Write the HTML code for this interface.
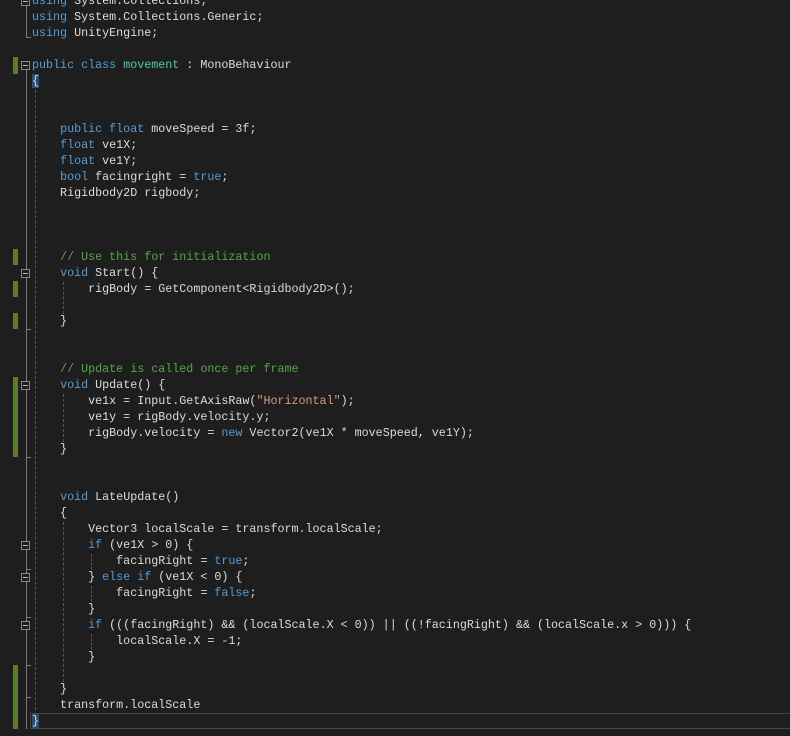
<!DOCTYPE html>
<html><head><style>
html,body{margin:0;padding:0;background:#1e1e1e;width:790px;height:736px;overflow:hidden;position:relative}
.l{position:absolute;left:32px;height:16px;line-height:16px;white-space:pre;font-family:"Liberation Mono",monospace;font-size:11.7px;color:#dcdcdc}
.k{color:#569cd6}.t{color:#4ec9b0}.c{color:#57a64a}.s{color:#d69d85}
.g{position:absolute;left:13px;width:5px;background:#5a7a34}
.v{position:absolute;left:26px;width:1px;background:#7a7a7a}
.h{position:absolute;left:26px;width:5px;height:1px;background:#7a7a7a}
.bx{position:absolute;left:21px;width:9px;height:9px;border:1px solid #8a8a8a;box-sizing:border-box;background:#1e1e1e}
.bx:after{content:"";position:absolute;left:1px;top:3px;width:5px;height:1px;background:#c0c0c0}
.d{position:absolute;width:0;border-left:1px dashed #555}
.hl{background:#264f78}
</style></head><body>
<div class="g" style="top:57px;height:17px"></div>
<div class="g" style="top:249px;height:16px"></div>
<div class="g" style="top:281px;height:16px"></div>
<div class="g" style="top:313px;height:16px"></div>
<div class="g" style="top:377px;height:80px"></div>
<div class="g" style="top:665px;height:64px"></div>

<div class="v" style="top:4px;height:33px"></div><div class="h" style="top:37px"></div>
<div class="v" style="top:70px;height:659px"></div>
<div class="h" style="top:329px"></div><div class="h" style="top:457px"></div>
<div class="h" style="top:569px"></div><div class="h" style="top:617px"></div>
<div class="h" style="top:665px"></div><div class="h" style="top:697px"></div>
<div class="bx" style="top:-3px"></div>
<div class="bx" style="top:61px"></div>
<div class="bx" style="top:269px"></div>
<div class="bx" style="top:381px"></div>
<div class="bx" style="top:541px"></div>
<div class="bx" style="top:573px"></div>
<div class="bx" style="top:621px"></div>

<div class="d" style="left:35px;top:90px;height:620px"></div>
<div class="d" style="left:63px;top:282px;height:32px"></div>
<div class="d" style="left:63px;top:394px;height:48px"></div>
<div class="d" style="left:63px;top:522px;height:160px"></div>
<div class="d" style="left:91px;top:554px;height:16px"></div>
<div class="d" style="left:91px;top:586px;height:16px"></div>
<div class="d" style="left:91px;top:634px;height:16px"></div>

<div style="position:absolute;left:30px;top:713px;width:770px;height:16px;border:1px solid #464646;box-sizing:border-box"></div>

<div class="l" style="top:-7px"><span class="k">using</span> System.Collections;</div>
<div class="l" style="top:9px"><span class="k">using</span> System.Collections.Generic;</div>
<div class="l" style="top:25px"><span class="k">using</span> UnityEngine;</div>
<div class="l" style="top:57px"><span class="k">public class</span> <span class="t">movement</span> : MonoBehaviour</div>
<div class="l" style="top:73px"><span class="hl">{</span></div>
<div class="l" style="top:121px">    <span class="k">public float</span> moveSpeed = 3f;</div>
<div class="l" style="top:137px">    <span class="k">float</span> ve1X;</div>
<div class="l" style="top:153px">    <span class="k">float</span> ve1Y;</div>
<div class="l" style="top:169px">    <span class="k">bool</span> facingright = <span class="k">true</span>;</div>
<div class="l" style="top:185px">    Rigidbody2D rigbody;</div>
<div class="l" style="top:249px">    <span class="c">// Use this for initialization</span></div>
<div class="l" style="top:265px">    <span class="k">void</span> Start() {</div>
<div class="l" style="top:281px">        rigBody = GetComponent&lt;Rigidbody2D&gt;();</div>
<div class="l" style="top:313px">    }</div>
<div class="l" style="top:361px">    <span class="c">// Update is called once per frame</span></div>
<div class="l" style="top:377px">    <span class="k">void</span> Update() {</div>
<div class="l" style="top:393px">        ve1x = Input.GetAxisRaw(<span class="s">"Horizontal"</span>);</div>
<div class="l" style="top:409px">        ve1y = rigBody.velocity.y;</div>
<div class="l" style="top:425px">        rigBody.velocity = <span class="k">new</span> Vector2(ve1X * moveSpeed, ve1Y);</div>
<div class="l" style="top:441px">    }</div>
<div class="l" style="top:489px">    <span class="k">void</span> LateUpdate()</div>
<div class="l" style="top:505px">    {</div>
<div class="l" style="top:521px">        Vector3 localScale = transform.localScale;</div>
<div class="l" style="top:537px">        <span class="k">if</span> (ve1X &gt; 0) {</div>
<div class="l" style="top:553px">            facingRight = <span class="k">true</span>;</div>
<div class="l" style="top:569px">        } <span class="k">else if</span> (ve1X &lt; 0) {</div>
<div class="l" style="top:585px">            facingRight = <span class="k">false</span>;</div>
<div class="l" style="top:601px">        }</div>
<div class="l" style="top:617px">        <span class="k">if</span> (((facingRight) &amp;&amp; (localScale.X &lt; 0)) || ((!facingRight) &amp;&amp; (localScale.x &gt; 0))) {</div>
<div class="l" style="top:633px">            localScale.X = -1;</div>
<div class="l" style="top:649px">        }</div>
<div class="l" style="top:681px">    }</div>
<div class="l" style="top:697px">    transform.localScale</div>
<div class="l" style="top:713px"><span class="hl">}</span></div>
</body></html>
